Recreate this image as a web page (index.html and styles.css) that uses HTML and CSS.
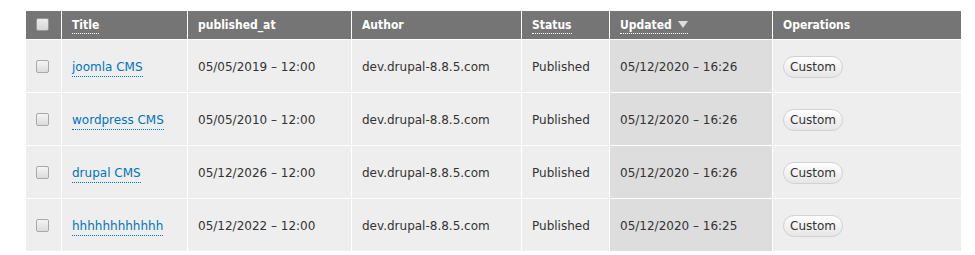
FILE: index.html
```html
<!DOCTYPE html>
<html lang="en">
<head>
    <meta charset="UTF-8">
    <title>Content</title>
    <link rel="stylesheet" href="styles.css">
</head>
<body>
    <table class="views-table">
        <colgroup>
            <col class="col-select">
            <col class="col-title">
            <col class="col-published">
            <col class="col-author">
            <col class="col-status">
            <col class="col-updated">
            <col class="col-ops">
        </colgroup>
        <thead>
            <tr>
                <th class="select-all"><span class="checkbox"></span></th>
                <th><a href="#" class="sort-link">Title</a></th>
                <th>published_at</th>
                <th>Author</th>
                <th><a href="#" class="sort-link">Status</a></th>
                <th class="is-active"><a href="#" class="sort-link">Updated <span class="sort-icon"></span></a></th>
                <th>Operations</th>
            </tr>
        </thead>
        <tbody>
            <tr>
                <td class="select"><span class="checkbox"></span></td>
                <td><a href="#" class="title-link">joomla CMS</a></td>
                <td>05/05/2019 – 12:00</td>
                <td>dev.drupal-8.8.5.com</td>
                <td>Published</td>
                <td class="is-active">05/12/2020 – 16:26</td>
                <td><button class="op-button">Custom</button></td>
            </tr>
            <tr>
                <td class="select"><span class="checkbox"></span></td>
                <td><a href="#" class="title-link">wordpress CMS</a></td>
                <td>05/05/2010 – 12:00</td>
                <td>dev.drupal-8.8.5.com</td>
                <td>Published</td>
                <td class="is-active">05/12/2020 – 16:26</td>
                <td><button class="op-button">Custom</button></td>
            </tr>
            <tr>
                <td class="select"><span class="checkbox"></span></td>
                <td><a href="#" class="title-link">drupal CMS</a></td>
                <td>05/12/2026 – 12:00</td>
                <td>dev.drupal-8.8.5.com</td>
                <td>Published</td>
                <td class="is-active">05/12/2020 – 16:26</td>
                <td><button class="op-button">Custom</button></td>
            </tr>
            <tr>
                <td class="select"><span class="checkbox"></span></td>
                <td><a href="#" class="title-link">hhhhhhhhhhhh</a></td>
                <td>05/12/2022 – 12:00</td>
                <td>dev.drupal-8.8.5.com</td>
                <td>Published</td>
                <td class="is-active">05/12/2020 – 16:25</td>
                <td><button class="op-button">Custom</button></td>
            </tr>
        </tbody>
    </table>
</body>
</html>
```

FILE: styles.css
```css
/* Base */
body {
    margin: 0;
    padding: 11px 0 0 26px;
    background: #fff;
    font-family: "DejaVu Sans", Verdana, sans-serif;
    font-size: 12px;
    color: #333;
}

/* Table */
.views-table {
    table-layout: fixed;
    width: 935px;
    border-collapse: separate;
    border-spacing: 0;
}

.col-select { width: 35px; }
.col-title { width: 126px; }
.col-published { width: 164px; }
.col-author { width: 170px; }
.col-status { width: 88px; }
.col-updated { width: 163px; }
.col-ops { width: 189px; }

th,
td {
    text-align: left;
    padding: 0 10px;
    border-left: 1px solid #fff;
    border-bottom: 1px solid #fff;
    white-space: nowrap;
}

th:first-child,
td:first-child {
    border-left: none;
}

th {
    height: 27px;
    background: #757575;
    color: #fff;
    font-family: "DejaVu Sans Condensed", "DejaVu Sans", sans-serif;
    font-weight: bold;
    padding-top: 0;
    padding-bottom: 1px;
}

td {
    height: 50px;
    padding-top: 2px;
    background: #eee;
}

td.is-active {
    background: #ddd;
}

th.select-all {
    padding: 0 0 1px 10px;
}

td.select {
    padding: 2px 0 0 10px;
}

/* Checkboxes */
.checkbox {
    display: inline-block;
    width: 11px;
    height: 11px;
    border: 1px solid #a9a9a9;
    border-radius: 2px;
    background: linear-gradient(#f4f4f4, #dcdcdc);
    vertical-align: middle;
    position: relative;
    top: -1px;
}

th .checkbox {
    border-color: #999;
    background: linear-gradient(#ececec, #d6d6d6);
}

/* Links */
.sort-link {
    color: #fff;
    text-decoration: none;
    border-bottom: 1px dotted #fff;
    padding-bottom: 1px;
}

.sort-icon {
    display: inline-block;
    width: 0;
    height: 0;
    margin-left: 3px;
    border-left: 5px solid transparent;
    border-right: 5px solid transparent;
    border-top: 7px solid #ddd;
    vertical-align: 1px;
}

.title-link {
    color: #0074bd;
    text-decoration: none;
    border-bottom: 1px dotted #0074bd;
    padding-bottom: 2px;
}

/* Operations button */
.op-button {
    font-family: inherit;
    font-size: 12px;
    color: #333;
    height: 22px;
    padding: 0 6px;
    border: 1px solid #d2d2d2;
    border-radius: 11px;
    background: linear-gradient(#fefefe, #e6e6e6);
    cursor: pointer;
}
```
